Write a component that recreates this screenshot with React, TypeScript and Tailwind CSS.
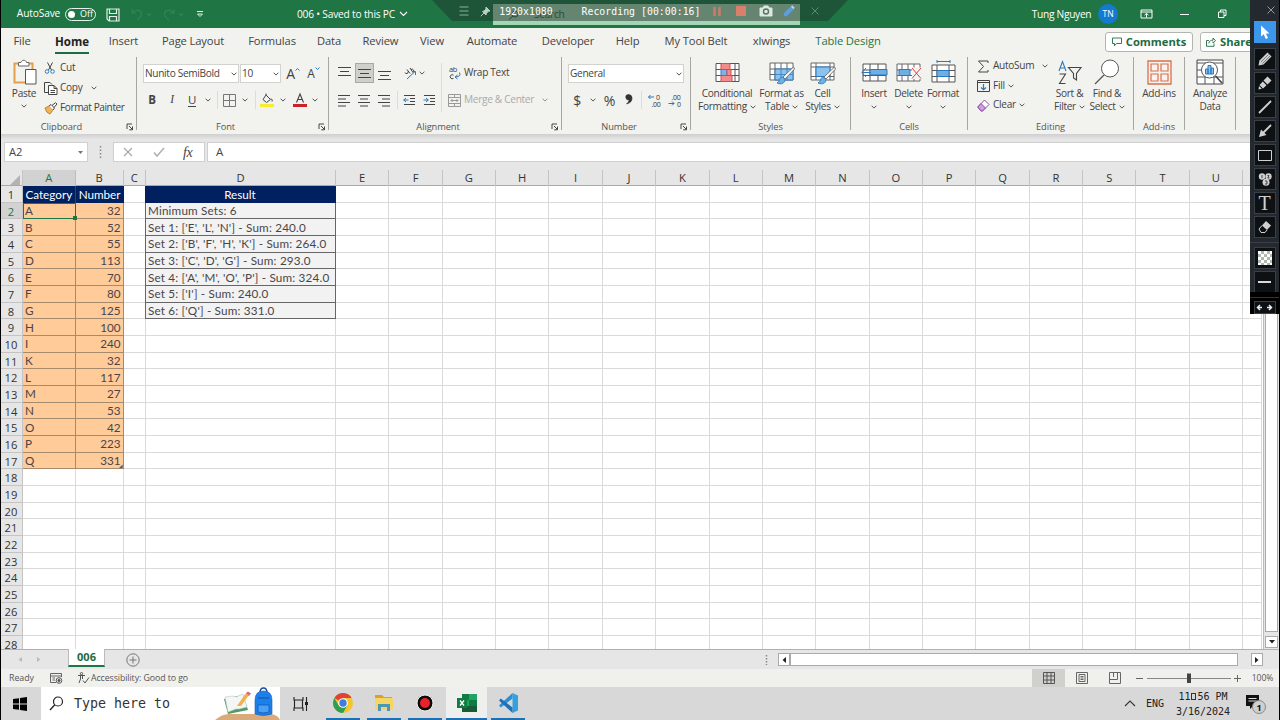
import type { ReactNode } from "react";

type BoxProps = { c?: string; children?: ReactNode };

/** Fixed-size centring cell used by every bar of the window. */
function C({ c = "", children }: BoxProps) {
  return (
    <div className={`flex shrink-0 items-center justify-center whitespace-nowrap ${c}`}>{children}</div>
  );
}

function Chev({ c = "w-[6px]" }: { c?: string }) {
  return (
    <svg viewBox="0 0 6 4" className={`h-[4px] shrink-0 ${c}`} fill="none" stroke="#555" strokeWidth="1">
      <path d="M0.6 0.7 3 3.1 5.4 0.7" />
    </svg>
  );
}

function Svg({ w, h, c, children }: { w: number; h: number; c?: string; children: ReactNode }) {
  return (
    <svg width={w} height={h} viewBox={`0 0 ${w} ${h}`} fill="none" stroke="#444" className={`shrink-0 overflow-visible ${c ?? ""}`}>
      {children}
    </svg>
  );
}

/* ---------- Title bar ---------- */

function TitleBar() {
  return (
    <div className="flex h-[28px] shrink-0 items-center bg-[#1f7543] text-[10.2px] text-white">
      <C c="ml-[16px] w-[43px] tracking-[-0.15px]">AutoSave</C>
      <div className="ml-[5px] flex h-[13px] w-[31px] items-center rounded-full border border-white/90 pl-[2px]">
        <span className="h-[7px] w-[7px] rounded-full bg-white" />
        <span className="ml-[5px] text-[9px]">Off</span>
      </div>
      <Svg w={14} h={14} c="ml-[10px] mt-px">
        <path d="M1 1H13V13H3L1 11ZM3.5 1V5.5H10.5V1M3.5 13V8.5H10.5V13" stroke="#e3f0e8" strokeWidth="1.2" />
      </Svg>
      <Svg w={24} h={13} c="ml-[10px]">
        <path d="M2 1V5H6M2.3 4.8C5 1 12 1.500 11.500 6.500 11 9 9 10 7 12M17 5.500 19 7.500 21 5.500" stroke="#348457" strokeWidth="1.2" />
      </Svg>
      <Svg w={24} h={13} c="ml-[8px]">
        <path d="M12 1V5H8M11.700 4.800C9 1 2 1.500 2.500 6.500 3 9 5 10 7 12M17 5.500 19 7.500 21 5.500" stroke="#348457" strokeWidth="1.2" />
      </Svg>
      <Svg w={8} h={8} c="ml-[10px]">
        <path d="M1 1.500H7M1.500 4 4 6.500 6.500 4Z" stroke="#e3f0e8" />
      </Svg>
      <C c="ml-[92px] w-[100px] pt-[2px] tracking-[-0.2px]">006 • Saved to this PC</C>
      <Svg w={9} h={6} c="ml-[3px]">
        <path d="M1 1 4.500 4.500 8 1" stroke="#fff" strokeWidth="1.1" />
      </Svg>
      <C c="ml-[624px] w-[59px] pt-px tracking-[-0.3px]">Tung Nguyen</C>
      <C c="ml-[7px] h-[20px] w-[20px] rounded-full bg-[#1479d0] text-[8.5px]">TN</C>
      <Svg w={13} h={10} c="ml-[22px]">
        <path d="M1 1H12V9H1ZM1 3H12M6.500 8.500V4.500M4.500 6.200 6.500 4.300 8.500 6.200" stroke="#fff" />
      </Svg>
      <Svg w={9} h={3} c="ml-[27px]"><path d="M0 1.500H9" stroke="#fff" /></Svg>
      <Svg w={10} h={10} c="ml-[28px]">
        <path d="M1.500 3H7V8.500H1.500ZM3.500 3V1H9V6.500H7" stroke="#fff" />
      </Svg>
    </div>
  );
}

/* ---------- Ribbon tabs ---------- */

const tabs: [string, string][] = [
  ["File", "ml-[13px] w-[16px]"],
  ["Home", "ml-[25px] w-[34px]"],
  ["Insert", "ml-[20px] w-[29px]"],
  ["Page Layout", "ml-[24px] w-[62px]"],
  ["Formulas", "ml-[25px] w-[46px]"],
  ["Data", "ml-[22px] w-[24px]"],
  ["Review", "ml-[22px] w-[35px]"],
  ["View", "ml-[22px] w-[24px]"],
  ["Automate", "ml-[23px] w-[50px]"],
  ["Developer", "ml-[25px] w-[52px]"],
  ["Help", "ml-[22px] w-[23px]"],
  ["My Tool Belt", "ml-[26px] w-[62px]"],
  ["xlwings", "ml-[26px] w-[37px]"],
  ["Table Design", "ml-[26px] w-[64px] text-[#1f7543]"],
];

function TabBar() {
  return (
    <div className="flex h-[28px] shrink-0 items-center overflow-hidden bg-[#f2f2ee] text-[11.2px] tracking-[-0.12px] text-[#444]">
      {tabs.map(([t, c]) =>
        t === "Home" ? (
          <div key={t} className={`flex h-[24px] flex-col items-center justify-between border-b-2 border-[#1f6b41] ${c}`}>
            <span className="pt-[3px] text-[11.5px] font-bold tracking-normal text-[#222]">{t}</span>
          </div>
        ) : (
          <C key={t} c={`pb-px ${c}`}>{t}</C>
        )
      )}
      <C c="ml-[225px] h-[20px] w-[88px] gap-[4px] rounded-[3px] border border-[#b5b5b0] bg-white text-[11.2px] font-bold tracking-normal text-[#1f6b41]">
        <Svg w={10} h={10}><path d="M0.500 1H9.500V6.500H4.500L2.500 8.800V6.500H0.500Z" stroke="#1f6b41" strokeWidth="0.9" /></Svg>
        Comments
      </C>
      <div className="ml-[7px] flex h-[20px] w-[70px] shrink-0 items-center gap-[4px] rounded-[3px] border border-[#b5b5b0] bg-white pl-[5px] text-[11.2px] font-bold tracking-normal text-[#1f6b41]">
        <Svg w={10} h={10}><path d="M3 3.500H0.500V9.300H8V6.500M2.800 6.500C3 4 5 3.200 7 3.200V1L9.500 3.700 7 6V4.500" stroke="#1f6b41" strokeWidth="0.9" /></Svg>
        Share
      </div>
    </div>
  );
}

/* ---------- Ribbon ---------- */

function Group({ w, label, launcher, children }: { w: string; label: string; launcher?: boolean; children: ReactNode }) {
  return (
    <div className={`flex h-[78px] shrink-0 flex-col ${w}`}>
      <div className="flex h-[64px]">
        <div className="flex min-w-0 flex-1">{children}</div>
      </div>
      <div className="flex h-[14px] items-center justify-center text-[9.3px] tracking-[-0.1px] whitespace-nowrap text-[#555]">
        <span className="flex-1 text-center">{label}</span>
        {launcher && (
          <Svg w={8} h={8} c="ml-[4px] mr-[2px]"><path d="M1 6V1H6M3 3 6.500 6.500M6.500 3.500V6.800H3.200" /></Svg>
        )}
      </div>
    </div>
  );
}

function Divider() {
  return <div className="mt-[1px] h-[73px] w-px shrink-0 bg-[#a6a6a3]" />;
}

function Sep({ c = "" }: { c?: string }) {
  return <div className={`w-px shrink-0 bg-[#dcdcd8] ${c}`} />;
}

function Lines({ d }: { d: string }) {
  return <Svg w={13} h={13}><path d={d} /></Svg>;
}

function Big({ w, icon, a, b, chevB, below }: { w: string; icon: ReactNode; a: string; b?: string; chevB?: boolean; below?: boolean }) {
  return (
    <div className={`flex shrink-0 flex-col items-center leading-[13px] whitespace-nowrap ${w}`}>
      <C c="h-[31px] w-[28px] pt-[1px]">{icon}</C>
      <span>{a}</span>
      {b && <span className="flex items-center gap-[3px]">{b}{chevB && <Chev />}</span>}
      {below && <Chev c="mt-[5px] w-[6px]" />}
    </div>
  );
}

function GridBase() {
  return <path d="M1 3H24V20H1ZM1 9H24M1 14.500H24M6 3V20M12 3V20M18 3V20" fill="#fff" stroke="#666" />;
}

function Brush() {
  return (
    <>
      <path d="M24.500 7 14 17 16 19 25.500 9Z" fill="#fff" stroke="#666" strokeWidth="0.900" />
      <path d="M13.500 17C10 17 11.500 21 8 23 12.500 25 16 23 16 19.500Z" fill="#6eb0e6" stroke="#2b78bd" strokeWidth="0.900" />
    </>
  );
}

function Ribbon() {
  return (
    <div className="flex h-[78px] shrink-0 overflow-hidden bg-[#f2f2ee] text-[10.1px] tracking-[-0.3px] text-[#444]">
      <Group w="w-[135px]" label="Clipboard" launcher>
        <div className="ml-[9px] flex w-[28px] shrink-0 flex-col items-center">
          <Svg w={25} h={28} c="mt-[3px]">
            <path d="M8 4.500H2.500V23.500H13" stroke="#e3a04c" strokeWidth="2" />
            <path d="M16 4.500H20.500V10" stroke="#e3a04c" strokeWidth="2" />
            <path d="M6.500 7V3.500H9C9.500 0.500 14 0.500 14.500 3.500H17V7Z" fill="#fff" stroke="#666" />
            <path d="M13.500 10.500H24V25H13.500Z" fill="#fff" stroke="#555" />
          </Svg>
          <span className="leading-[13px]">Paste</span>
          <Chev c="mt-[4px] w-[6px]" />
        </div>
        <div className="ml-[6px] flex flex-col pt-[2px]">
          <div className="flex h-[20px] items-center gap-[4px]">
            <Svg w={12} h={12}>
              <path d="M3.500 0.500 7.500 8M8.500 0.500 4.500 8" />
              <circle cx="3" cy="9.500" r="1.800" stroke="#2e83c4" /><circle cx="8.500" cy="9.500" r="1.800" stroke="#2e83c4" />
            </Svg>
            Cut
          </div>
          <div className="flex h-[20px] items-center gap-[2px]">
            <Svg w={14} h={13}>
              <path d="M4 10.500H0.500V0.500H6L8 2.500" /><path d="M4.500 3.500H10L13 6.500V12.500H4.500ZM10 3.500V6.500H13M6.500 8.500H11M6.500 10.500H11" fill="#fff" />
            </Svg>
            Copy <Chev c="ml-[7px] w-[6px]" />
          </div>
          <div className="flex h-[20px] items-center gap-[2px] tracking-[-0.42px] whitespace-nowrap">
            <Svg w={14} h={13}>
              <path d="M1 6 5 4 9 8 6 12Q2 11 1 6Z" fill="#f0b35c" stroke="#c9822c" />
              <path d="M5 4 7 2.500 10.500 6 9 8M8 3.500 11.500 0.700 13 2 10 5.500" fill="#fff" />
            </Svg>
            Format Painter
          </div>
        </div>
      </Group>
      <Divider />

      <Group w="w-[191px]" label="Font" launcher>
        <div className="flex flex-col">
          <div className="ml-[6px] mt-[8px] flex h-[19px] items-center">
            <div className="flex h-[19px] w-[96px] items-center justify-between border border-[#d2d2ce] bg-white pl-[1px] pr-[1px]">
              <span className="whitespace-nowrap">Nunito SemiBold</span><Chev />
            </div>
            <div className="ml-[1px] flex h-[19px] w-[41px] items-center justify-between border border-[#d2d2ce] bg-white pl-[1px] pr-[1px]">
              <span>10</span><Chev />
            </div>
            <C c="ml-[5px] w-[14px] items-start text-[14px] leading-[15px]">A<Svg w={5} h={5} c="mt-[1px]"><path d="M0.500 3.500 2.500 1.500 4.500 3.500" stroke="#2b78bd" /></Svg></C>
            <C c="ml-[7px] w-[13px] items-start text-[12px] leading-[15px]">A<Svg w={5} h={5}><path d="M0.500 1.500 2.500 3.500 4.500 1.500" stroke="#2b78bd" /></Svg></C>
          </div>
          <div className="ml-[9px] mt-[7px] flex h-[20px] items-center text-[11.5px]">
            <C c="w-[12px] font-bold">B</C>
            <C c="ml-[8px] w-[12px] font-['Liberation_Serif'] italic">I</C>
            <C c="ml-[8px] w-[12px] underline underline-offset-2">U</C>
            <C c="ml-[6px] w-[8px]"><Chev /></C>
            <Sep c="ml-[5px] h-[18px]" />
            <Svg w={13} h={13} c="ml-[5px]"><path d="M0.500 0.500H12.500V12.500H0.500ZM6.500 1V12M1 6.500H12" stroke="#777" /></Svg>
            <Chev c="ml-[6px] w-[6px]" />
            <Sep c="ml-[7px] h-[18px]" />
            <Svg w={14} h={15} c="ml-[4px]">
              <path d="M6 2 10.500 6.500 6.500 9.500 3 6.500ZM6 2V0.500M11 5.500Q13 7 12 8.500" />
              <path d="M0 12.500H14" stroke="#f4ee2f" strokeWidth="3" />
            </Svg>
            <Chev c="ml-[6px] w-[6px]" />
            <Svg w={14} h={15} c="ml-[7px]">
              <path d="M3.500 9.500 7 1 10.500 9.500M4.700 6.500H9.300" strokeWidth="1.1" />
              <path d="M0 12.500H14" stroke="#cc2229" strokeWidth="3" />
            </Svg>
            <Chev c="ml-[5px] w-[6px]" />
          </div>
        </div>
      </Group>
      <Divider />

      <Group w="w-[232px]" label="Alignment" launcher>
        <div className="flex flex-col">
          <div className="ml-[9px] mt-[7px] flex h-[20px] items-center">
            <div className="-mt-[3px]"><Lines d="M0 2.500H13M2 6.500H11M0 10.500H13" /></div>
            <C c="ml-[4px] h-[20px] w-[19px] border border-[#a8a8a5] bg-[#cfcfcc]"><Lines d="M0 2.500H13M2 6.500H11M0 10.500H13" /></C>
            <div className="ml-[4px] pt-[5px]"><Lines d="M0 2.500H13M2 6.500H11M0 10.500H13" /></div>
            <Svg w={14} h={13} c="ml-[12px]">
              <path d="M2 5.500a1.500 1.500 0 1 0 3-1M4 2.500 7 6.500M7 1 10 5.500a1.600 1.600 0 0 0-2-3" />
              <path d="M4 12 12 4.500M9 4.500H12.500V8" stroke="#2b78bd" />
            </Svg>
            <Chev c="ml-[2px] w-[6px]" />
          </div>
          <div className="ml-[9px] mt-[7px] flex h-[20px] items-center">
            <Lines d="M0 1.500H12M0 5H8M0 8.500H12M0 12H8" />
            <div className="ml-[7px]"><Lines d="M0 1.500H12M2 5H10M0 8.500H12M2 12H10" /></div>
            <div className="ml-[7px]"><Lines d="M0 1.500H12M4 5H12M0 8.500H12M4 12H12" /></div>
            <Sep c="ml-[6px] h-[18px]" />
            <Svg w={13} h={12} c="ml-[5px]"><path d="M1 1.500H12M7 4.500H12M7 7.500H12M1 10.500H12" /><path d="M0.500 6H5.500M3 4 0.800 6 3 8" stroke="#2b78bd" /></Svg>
            <Svg w={13} h={12} c="ml-[7px]"><path d="M1 1.500H12M7 4.500H12M7 7.500H12M1 10.500H12" /><path d="M0.500 6H5.500M3 4 5.200 6 3 8" stroke="#2b78bd" /></Svg>
          </div>
        </div>
        <Sep c="ml-[5px] mt-[7px] h-[49px]" />
        <div className="flex flex-col">
          <div className="ml-[7px] mt-[7px] flex h-[20px] items-center gap-[3px]">
            <Svg w={12} h={14}>
              <text x="0" y="6" fontSize="7.500" fill="#444" stroke="none">ab</text>
              <path d="M4.500 9.200A2 2 0 1 0 4.500 12.300" />
              <path d="M10.500 6.500Q12.500 10.500 6.500 11M8.500 9 6 11 8.500 13" stroke="#2b78bd" />
            </Svg>
            Wrap Text
          </div>
          <div className="ml-[6px] mt-[7px] flex h-[20px] items-center gap-[3px] whitespace-nowrap text-[#aaa]">
            <Svg w={13} h={13}><path d="M0.500 0.500H12.500V12.500H0.500ZM0.500 3.500H12.500M0.500 9.500H12.500M6.500 0.500V3.500M6.500 9.500V12.500M3 6.500H10M4.500 5 3 6.500 4.500 8M8.500 5 10 6.500 8.500 8" stroke="#999" /></Svg>
            Merge &amp; Center <Chev c="ml-[5px] w-[6px] opacity-60" />
          </div>
        </div>
      </Group>
      <Divider />

      <Group w="w-[128px]" label="Number" launcher>
        <div className="flex flex-col">
          <div className="ml-[6px] mt-[8px] flex h-[19px] w-[116px] items-center justify-between border border-[#d2d2ce] bg-white pl-[1px] pr-[1px]">
            General<Chev />
          </div>
          <div className="ml-[9px] mt-[7px] flex h-[20px] items-center">
            <C c="w-[12px] text-[14px]">$</C>
            <Chev c="ml-[7px] w-[6px]" />
            <C c="ml-[7px] w-[13px] text-[14px]">%</C>
            <C c="ml-[6px] h-[20px] w-[14px] pb-[1px]">
              <Svg w={8} h={11}><path d="M3.500 0.500A2.700 2.700 0 1 0 4.200 5.800Q4 8 1.500 10 7.500 8.500 7 3.500 6.500 0.500 3.500 0.500Z" fill="#333" stroke="#333" strokeWidth="0.600" /></Svg>
            </C>
            <Sep c="ml-[5px] h-[18px]" />
            <Svg w={13} h={13} c="ml-[6px]">
              <path d="M0.500 3H6M2.500 1 0.500 3 2.500 5" stroke="#2b78bd" />
              <text x="8" y="5.500" fontSize="7" fill="#333" stroke="none">0</text><text x="3.500" y="13" fontSize="7" fill="#333" stroke="none">.00</text>
            </Svg>
            <Svg w={14} h={13} c="ml-[7px]">
              <text x="3.500" y="5.500" fontSize="7" fill="#333" stroke="none">.00</text><text x="9" y="13" fontSize="7" fill="#333" stroke="none">0</text>
              <path d="M0.500 9.500H6M4 7.500 6 9.500 4 11.500" stroke="#2b78bd" />
            </Svg>
          </div>
        </div>
      </Group>
      <Divider />

      <Group w="w-[159px]" label="Styles">
        <Big w="ml-[6px] w-[60px]" a="Conditional" b="Formatting" chevB icon={
          <Svg w={25} h={23}>
            <path d="M1 2.500H24V20.500H1ZM1 8.500H24M1 14.500H24M20 2.500V20.500" fill="#fff" stroke="#555" />
            <path d="M6 2.500H15V8.500H6ZM6 14.500H17V20.500H6Z" fill="#f28b8b" stroke="#d94a4a" />
            <path d="M6 8.500H12V14.500H6Z" fill="#7db4e6" stroke="#3b7fc4" /><path d="M12 8.500H16V14.500H12Z" fill="#f28b8b" stroke="#d94a4a" />
          </Svg>} />
        <Big w="w-[49px]" a="Format as" b="Table" chevB icon={
          <Svg w={26} h={25}><GridBase /><path d="M6 9H24V20H6Z" fill="#8cc2ee" stroke="#2b78bd" /><path d="M6 14.500H24M12 9V20M18 9V20" stroke="#4a87bd" /><Brush /></Svg>} />
        <Big w="w-[33px]" a="Cell" b="Styles" chevB icon={
          <Svg w={26} h={25}><path d="M1 3H24V20H1ZM1 7H24M1 16.500H24M6 3V20M20 3V20" fill="#fff" stroke="#666" /><path d="M6 7H20V16.500H6Z" fill="#8cc2ee" stroke="#2b78bd" /><Brush /></Svg>} />
      </Group>
      <Divider />

      <Group w="w-[116px]" label="Cells">
        <Big w="ml-[6px] w-[34px]" a="Insert" below icon={
          <Svg w={27} h={23}><path d="M2 3H25V20H2ZM2 9H25M2 14.500H25M9 3V20M17 3V20" fill="#fff" stroke="#555" /><path d="M9 8.500H26V14H9Z" fill="#6eb0e6" stroke="#2b78bd" /><path d="M1 11.500H10M5 7 1 11.500 5 16" stroke="#2b78bd" /></Svg>} />
        <Big w="w-[35px]" a="Delete" below icon={
          <Svg w={26} h={23}><GridBase /><path d="M3 8.500H14V14.500H3Z" fill="#6eb0e6" stroke="#2b78bd" /><path d="M16 6.500H26V18H16Z" fill="#f2f2ee" stroke="none" /><path d="M16 7 25 17.500M25 7 16 17.500" stroke="#d9414a" /></Svg>} />
        <Big w="w-[34px]" a="Format" below icon={
          <Svg w={25} h={25}><path d="M1 5H24V22H1ZM1 10.500H24M1 16.500H24M6 5V22M18 5V22" fill="#fff" stroke="#555" /><path d="M6 10.500H18V16.500H6Z" fill="#6eb0e6" stroke="#2b78bd" /><path d="M6 1.500H19M6 0V3M19 0V3" stroke="#2b78bd" /></Svg>} />
      </Group>
      <Divider />

      <Group w="w-[165px]" label="Editing">
        <div className="ml-[9px] flex w-[73px] shrink-0 flex-col">
          <div className="flex h-[20px] items-center gap-[4px] whitespace-nowrap">
            <Svg w={12} h={13}><path d="M11 3V1H1.500L6.500 6.500 1.500 12H11V10" /></Svg>
            AutoSum <Chev c="ml-[4px] w-[6px]" />
          </div>
          <div className="flex h-[19px] items-center gap-[3px]">
            <Svg w={13} h={12}><path d="M0.500 0.500H12.500V11.500H0.500ZM0.500 2.500H12.500" /><path d="M6.500 4V9.500M4 7.500 6.500 9.800 9 7.500" stroke="#2b78bd" strokeWidth="1.200" /></Svg>
            Fill <Chev />
          </div>
          <div className="flex h-[20px] items-center gap-[3px]">
            <Svg w={13} h={13}><path d="M7.500 1 12 5.500 5.500 12H4L0.800 8Z" fill="#fff" stroke="#8b4fa8" /><path d="M4 4.500 8.500 9 5.500 12H4L0.800 8Z" fill="#c9a0dc" stroke="#8b4fa8" /></Svg>
            Clear <Chev />
          </div>
        </div>
        <Big w="ml-[1px] w-[37px]" a="Sort &" b="Filter" chevB icon={
          <Svg w={24} h={25}>
            <path d="M1 11 4.500 1.500 8 11M2.300 8H6.700" stroke="#2b78bd" strokeWidth="1.100" />
            <path d="M1.500 14H7.500L1.500 23.500H7.500" strokeWidth="1.100" />
            <path d="M10.500 7.500H23L18.500 13.500V20L15.500 18V13.500Z" strokeWidth="1.100" />
          </Svg>} />
        <Big w="w-[38px]" a="Find &" b="Select" chevB icon={
          <Svg w={26} h={26}><circle cx="16" cy="9.500" r="8.500" fill="#fff" stroke="#555" /><path d="M10 16 1 25" stroke="#555" strokeWidth="1.300" /></Svg>} />
      </Group>
      <Divider />

      <Group w="w-[50px]" label="Add-ins">
        <Big w="w-[50px]" a="Add-ins" icon={
          <Svg w={25} h={25}><path d="M1 1H24V24H1Z" stroke="#d9704e" strokeWidth="1.300" /><path d="M4 4H11V11H4ZM14 4H21V11H14ZM4 14H11V21H4ZM14 14H21V21H14Z" fill="#fdf3ee" stroke="#d9704e" strokeWidth="1.200" /></Svg>} />
      </Group>
      <Divider />
      <Group w="w-[50px]" label="">
        <Big w="w-[50px]" a="Analyze" b="Data" icon={
          <Svg w={28} h={27}>
            <path d="M1 1H27V25H1Z" fill="#fff" /><path d="M1 4H27M1 11H7M1 18H27M9 18V25M18 18V25" stroke="#555" />
            <circle cx="13.500" cy="11" r="8" fill="#fff" stroke="#555" /><path d="M19.500 17 26 24" stroke="#444" strokeWidth="1.600" />
            <path d="M9.500 10H12V15H9.500ZM12 6.500H15V15H12ZM15 9H17.500V15H15Z" fill="#8cc2ee" stroke="#2b78bd" />
          </Svg>} />
      </Group>
      <Divider />
    </div>
  );
}

/* ---------- Formula bar ---------- */

function FormulaBar() {
  return (
    <div className="flex h-[36px] shrink-0 items-start bg-gradient-to-b from-[#cfcfcf] from-0% via-[#e6e6e6] via-15% to-[#e6e6e6] pt-[8px] text-[11.2px] text-[#444]">
      <div className="ml-[3px] flex h-[20px] w-[84px] items-center justify-between border border-[#d0d0d0] bg-white pl-[4px] pr-[4px]">
        A2
        <Svg w={5} h={3}><path d="M0 0H5L2.500 3Z" fill="#777" stroke="none" /></Svg>
      </div>
      <Svg w={3} h={12} c="ml-[11px] mt-[4px]"><path d="M1.500 0V12" stroke="#888" strokeWidth="1.500" strokeDasharray="1.500 2" /></Svg>
      <div className="ml-[11px] flex h-[20px] w-[92px] items-center border border-[#d0d0d0] bg-white">
        <Svg w={10} h={10} c="ml-[9px]"><path d="M1 1 9 9M9 1 1 9" stroke="#aaa" strokeWidth="1.200" /></Svg>
        <Svg w={12} h={10} c="ml-[20px]"><path d="M1 5.500 4 9 11 1" stroke="#b0b0b0" strokeWidth="1.500" /></Svg>
        <span className="ml-[18px] font-['Liberation_Serif'] text-[14px] tracking-[-0.3px] italic text-[#444]">fx</span>
      </div>
      <div className="ml-[2px] flex h-[20px] flex-1 items-center border border-r-0 border-[#d0d0d0] bg-white pl-[8px] text-[11.5px]">A</div>
    </div>
  );
}

/* ---------- Sheet ---------- */

const categories: [string, number][] = [
  ["A", 32], ["B", 52], ["C", 55], ["D", 113], ["E", 70], ["F", 80], ["G", 125], ["H", 100],
  ["I", 240], ["K", 32], ["L", 117], ["M", 27], ["N", 53], ["O", 42], ["P", 223], ["Q", 331],
];

const results = [
  "Minimum Sets: 6",
  "Set 1: ['E', 'L', 'N'] - Sum: 240.0",
  "Set 2: ['B', 'F', 'H', 'K'] - Sum: 264.0",
  "Set 3: ['C', 'D', 'G'] - Sum: 293.0",
  "Set 4: ['A', 'M', 'O', 'P'] - Sum: 324.0",
  "Set 5: ['I'] - Sum: 240.0",
  "Set 6: ['Q'] - Sum: 331.0",
];

const restCols = "EFGHIJKLMNOPQRSTU".split("");
const rows = Array.from({ length: 28 }, (_, i) => i + 1);

const gridCols = "grid grid-cols-[23px_52.6px_48px_22.4px_190px_repeat(17,53.37px)_19px]";
const line = "border-r border-b border-[#dadada]";

function HeaderRow() {
  return (
    <div className={`${gridCols} h-[16px] shrink-0 border-b border-[#a9a9a9] bg-[#e6e6e6] text-[11.2px] leading-[16px] text-[#333]`}>
      <div className="flex items-end justify-end border-r border-[#c4c4c4] p-[2px]">
        <Svg w={10} h={10}><path d="M10 0V10H0Z" fill="#b3b3b3" stroke="none" /></Svg>
      </div>
      <div className="border-r border-b border-b-[#1f7543] border-[#bdbdbd] bg-[#d2d2d2] text-center text-[#1f7543]">A</div>
      {["B", "C", "D", ...restCols].map((c) => (
        <div key={c} className="border-r border-[#c4c4c4] text-center">{c}</div>
      ))}
      <div className="border-r border-[#c4c4c4]" />
    </div>
  );
}

function CategoryCells({ r }: { r: number }) {
  if (r === 1)
    return (
      <>
        <div className="flex items-center justify-center border-r border-[#2c4470] bg-[#002060] text-white">Category</div>
        <div className="flex items-center justify-center bg-[#002060] text-white">Number</div>
      </>
    );
  const d = categories[r - 2];
  if (!d) return (<><div className={line} /><div className={line} /></>);
  return (
    <>
      <div className={`relative flex items-center border-r border-b border-[#a58a6d] bg-[#fecb99] pl-[2px] ${r === 2 ? "z-10 outline-[1.5px] -outline-offset-1 outline-[#1f7543]" : ""}`}>
        {d[0]}
        {r === 2 && <span className="absolute -right-[2px] -bottom-[2px] h-[4px] w-[4px] bg-[#1f7543]" />}
      </div>
      <div className="relative flex items-center justify-end border-r border-b border-[#a58a6d] bg-[#fecb99] pr-[2px]">
        {d[1]}
        {r === 17 && <span className="absolute right-0 bottom-0 h-[4px] w-[4px] bg-[#4d5590] [clip-path:polygon(100%_0,100%_100%,0_100%)]" />}
      </div>
    </>
  );
}

function ResultCell({ r }: { r: number }) {
  if (r === 1) return <div className="-ml-px flex items-center justify-center border-r border-[#002060] bg-[#002060] text-white">Result</div>;
  const t = results[r - 2];
  if (!t) return <div className={line} />;
  return (
    <div className="-ml-px flex items-center border border-t-0 border-[#666] bg-[#f2f2f2] pl-[2px] tracking-[0.18px] whitespace-nowrap">{t}</div>
  );
}

function Sheet() {
  return (
    <div className="flex h-[479px] shrink-0 bg-white">
      <div className="-ml-px flex w-[1263px] shrink-0 flex-col overflow-hidden">
        <HeaderRow />
        {rows.map((r) => (
          <div key={r} className={`${gridCols} h-[16.68px] shrink-0 grid-rows-[16.68px] font-[Lato] text-[11.7px] leading-[15px] text-[#4b4548]`}>
            <div className={`flex items-center justify-center border-r border-b border-[#c4c4c4] pt-[2px] font-['Open_Sans'] text-[11.2px] leading-[14px] ${r === 2 ? "bg-[#d2d2d2] text-[#1f7543]" : "bg-[#e6e6e6] text-[#333]"}`}>{r}</div>
            <CategoryCells r={r} />
            <div className={line} />
            <ResultCell r={r} />
            {restCols.map((c) => <div key={c} className={line} />)}
            <div className={line} />
          </div>
        ))}
      </div>
      <div className="flex flex-1 flex-col justify-end border-l border-[#bbb] bg-[#e6e6e6] px-[1px]">
        <div className="mb-[4px] flex-1 border border-[#aaa] bg-white" />
        <C c="mb-px h-[12px] border border-[#aaa] bg-white"><Svg w={6} h={4}><path d="M0 0H6L3 3.500Z" fill="#222" stroke="none" /></Svg></C>
      </div>
    </div>
  );
}

/* ---------- Bottom bars ---------- */

function SheetTabs() {
  return (
    <div className="flex h-[20px] shrink-0 items-center border-t border-[#b0b0b0] bg-[#e6e6e6]">
      <Svg w={4} h={5} c="ml-[17px]"><path d="M4 0V5L0.500 2.500Z" fill="#bbb" stroke="none" /></Svg>
      <Svg w={4} h={5} c="ml-[15px]"><path d="M0 0V5L3.500 2.500Z" fill="#bbb" stroke="none" /></Svg>
      <C c="-mt-[3px] ml-[27px] h-[18px] w-[37px] border-x border-b-2 border-x-[#bbb] border-b-[#1f7543] bg-white text-[11px] font-bold text-[#1f6b41]">006</C>
      <Svg w={14} h={14} c="ml-[21px]"><circle cx="7" cy="7" r="6.200" stroke="#777" /><path d="M7 3.500V10.500M3.500 7H10.500" stroke="#777" /></Svg>
      <Svg w={3} h={10} c="ml-[625px]"><path d="M1.500 0V10" stroke="#888" strokeWidth="1.500" strokeDasharray="1.500 1.500" /></Svg>
      <C c="ml-[10px] h-[13px] w-[12px] border border-[#aaa] bg-white"><Svg w={4} h={6}><path d="M4 0V6L0.500 3Z" fill="#222" stroke="none" /></Svg></C>
      <div className="h-[13px] w-[448px] border border-[#aaa] bg-white" />
      <C c="ml-[13px] h-[13px] w-[12px] border border-[#aaa] bg-white"><Svg w={4} h={6}><path d="M0 0V6L3.500 3Z" fill="#222" stroke="none" /></Svg></C>
    </div>
  );
}

function StatusBar() {
  return (
    <div className="flex h-[18px] shrink-0 items-center bg-[#f0f1ec] text-[8.800px] text-[#555]">
      <C c="ml-[8px] w-[25px] pt-px">Ready</C>
      <Svg w={13} h={11} c="ml-[16px]"><path d="M0.500 0.500H11.500V4M0.500 0.500V9.500H6M0.500 3H11.500M2.500 5H5M2.500 7H5" stroke="#666" /><circle cx="9" cy="7.500" r="2.800" stroke="#555" /><circle cx="9" cy="7.500" r="1" fill="#555" /></Svg>
      <Svg w={13} h={12} c="ml-[14px]"><circle cx="4.500" cy="1.700" r="1.200" stroke="#555" /><path d="M1 3.500H8M3.500 4V7L2 11M5.500 4V7M6 8.500 8 11 12 5.500" stroke="#555" /></Svg>
      <C c="ml-[1px] w-[97px] pt-px tracking-[-0.08px]">Accessibility: Good to go</C>
      <C c="ml-[844px] h-[18px] w-[33px] bg-[#d0d1cc]">
        <Svg w={12} h={12}><path d="M0.500 0.500H11.500V11.500H0.500ZM4 0.500V11.500M8 0.500V11.500M0.500 4H11.500M0.500 8H11.500" stroke="#555" /></Svg>
      </C>
      <Svg w={12} h={12} c="ml-[11px]"><path d="M0.500 0.500H11.500V11.500H0.500ZM3 2.500H9V9.500H3ZM4.500 4.500H7.500M4.500 6H7.500M4.500 7.500H7.500" stroke="#666" /></Svg>
      <Svg w={12} h={12} c="ml-[21px]"><path d="M0.500 0.500H11.500V11.500H0.500ZM4.500 0.500V5M8.500 0.500V7.500H0.500" stroke="#666" /></Svg>
      <Svg w={7} h={3} c="ml-[15px]"><path d="M0 1.500H7" stroke="#666" /></Svg>
      <Svg w={84} h={10} c="ml-[4px]"><path d="M0 5.500H84" stroke="#888" /><path d="M40 0.500H44V10H40Z" fill="#444" stroke="none" /></Svg>
      <Svg w={7} h={7} c="ml-[3px]"><path d="M0 3.500H7M3.500 0V7" stroke="#666" /></Svg>
      <C c="ml-[11px] w-[21px] pt-px text-[8.600px] tracking-[-0.1px]">100%</C>
    </div>
  );
}

function TaskApp({ c, active, children }: { c: string; active?: boolean; children: ReactNode }) {
  return (
    <div className={`flex h-[33px] shrink-0 flex-col items-center justify-between border-b-2 border-[#1c70b5] pt-[6px] ${active ? "bg-[#efefee]" : ""} ${c}`}>
      {children}
    </div>
  );
}

function Taskbar() {
  return (
    <div className="flex h-[33px] shrink-0 items-center bg-[#d8d8d8] text-[#222]">
      <Svg w={14} h={14} c="ml-[12px]"><path d="M0 2 6 1.200V6.600H0ZM7 1 14 0V6.600H7ZM0 7.500H6V12.800L0 12ZM7 7.500H14V14L7 13Z" fill="#000" stroke="none" /></Svg>
      <div className="ml-[14px] flex h-[33px] w-[239px] shrink-0 items-center overflow-hidden bg-white">
        <Svg w={15} h={15} c="ml-[8px]"><circle cx="9" cy="5.500" r="4.500" stroke="#222" strokeWidth="1.200" /><path d="M5.800 8.800 1 14" stroke="#222" strokeWidth="1.300" /></Svg>
        <span className="ml-[10px] pt-px whitespace-pre font-['DejaVu_Sans_Mono'] text-[13.300px] text-[#333]">Type here to</span>
        <Svg w={65} h={33} c="ml-auto">
          <path d="M0 33Q8 26 16 27L56 27Q63 28 65 33Z" fill="#d9ab7b" stroke="none" />
          <path d="M9 12 28 8 33 23 13 27Z" fill="#4f9a68" stroke="none" />
          <path d="M10 10 18 9 21 10 28 7 32 20 24 22 21 22 13 25Z" fill="#f3f6f4" stroke="#b9c9c0" strokeWidth="0.600" />
          <path d="M22 19 31 6 34 8 26 19Z" fill="#f2b14a" stroke="none" /><path d="M31 6 33 4.500 36 6.500 34 9Z" fill="#e06a6a" stroke="none" />
          <path d="M45 6Q45 1 48.500 1T52 6" stroke="#1a4fa0" strokeWidth="1.500" />
          <path d="M40 27V13Q40 4 48.500 4T57 13V27Q48 30 40 27Z" fill="#1d7fe8" stroke="#1560c0" strokeWidth="0.600" />
          <path d="M43 18H54V25Q48 27 43 25Z" fill="#4aa0f5" stroke="#0f52b0" strokeWidth="0.700" /><path d="M43 11H54" stroke="#0f52b0" />
        </Svg>
      </div>
      <Svg w={15} h={14} c="ml-[13px]"><path d="M1 0V3H10V0M1 14V11H10V14M1.500 3V11M9.500 3V11M13.500 0V14" stroke="#222" strokeWidth="1.100" /><path d="M12 5H15V8H12Z" fill="#222" stroke="none" /></Svg>
      <TaskApp c="ml-[18px] w-[34px]">
        <Svg w={20} h={20}>
          <circle cx="10" cy="10" r="10" fill="#f6c52c" stroke="none" />
          <path d="M10 10 1.340 5A10 10 0 0 1 18.660 5H10Z" fill="#dd4436" stroke="none" />
          <path d="M10 10 5.700 12.500 1.340 5A10 10 0 0 0 10 20L14.300 12.500Z" fill="#2f9e50" stroke="none" />
          <circle cx="10" cy="10" r="4.800" fill="#fff" stroke="none" /><circle cx="10" cy="10" r="3.700" fill="#3c7de0" stroke="none" />
        </Svg>
      </TaskApp>
      <TaskApp c="ml-[7px] w-[34px]">
        <Svg w={20} h={20}>
          <path d="M1 2H8L10 4H18V9H1Z" fill="#d9a030" stroke="none" /><path d="M1 5H19V17H1Z" fill="#f6d567" stroke="none" />
          <path d="M4 11H16V18H13V14H7V18H4Z" fill="#4b97b5" stroke="none" />
        </Svg>
      </TaskApp>
      <TaskApp c="ml-[7px] w-[34px]">
        <Svg w={20} h={20}><circle cx="10" cy="10" r="8" fill="#0b0b0b" stroke="#f0f0f0" /><circle cx="10" cy="10" r="5" fill="#e8222a" stroke="none" /></Svg>
      </TaskApp>
      <TaskApp active c="ml-[4px] w-[41px]">
        <Svg w={20} h={20}>
          <path d="M5 1H20V19H5Z" fill="#21a366" stroke="none" /><path d="M5 1H12V7H5Z" fill="#107c41" stroke="none" />
          <path d="M12 7H20V13H12Z" fill="#107c41" stroke="none" /><path d="M5 13H20V19H5Z" fill="#185c37" stroke="none" />
          <path d="M0 5H10V15H0Z" fill="#107c41" stroke="none" /><path d="M3 7.500 7 12.500M7 7.500 3 12.500" stroke="#fff" strokeWidth="1.400" />
        </Svg>
      </TaskApp>
      <TaskApp c="ml-[4px] w-[34px]">
        <Svg w={20} h={20}>
          <path d="M14.500 0 20 2.500V17.500L14.500 20Z" fill="#35a0e0" stroke="none" />
          <path d="M14.500 0 1 12.500 2.800 14.500 14.500 5.500Z" fill="#2b8fd6" stroke="none" /><path d="M14.500 20 1 7.500 2.800 5.500 14.500 14.500Z" fill="#1c73b5" stroke="none" />
        </Svg>
      </TaskApp>
      <Svg w={12} h={7} c="ml-[599px]"><path d="M1 6 6 1 11 6" stroke="#333" strokeWidth="1.100" /></Svg>
      <C c="ml-[10px] w-[18px] font-['DejaVu_Sans_Mono'] text-[10px]">ENG</C>
      <div className="ml-[12px] flex w-[54px] shrink-0 flex-col items-center whitespace-nowrap font-['DejaVu_Sans_Mono'] text-[10px] leading-[15px]">
        <span className="flex items-center">11<span className="mx-[1px] h-[7px] w-[5px] border border-[#333]" />56 PM</span>
        <span>3/16/2024</span>
      </div>
      <Svg w={21} h={22} c="ml-[16px]">
        <path d="M0 2H13V13H7L4 16V13H0Z" fill="#111" stroke="none" /><path d="M2.500 5.500H10.500M2.500 8H10.500" stroke="#ddd" />
        <circle cx="13" cy="14" r="6.500" fill="#cfcfcf" stroke="#888" />
        <text x="10.500" y="17.500" fontSize="9" fontWeight="bold" fill="#111" stroke="none">1</text>
      </Svg>
    </div>
  );
}

/* ---------- Floating recorder overlays ---------- */

function RecorderBar() {
  return (
    <div className="absolute left-[432px] top-0 flex h-[25px] w-[416px] items-start font-['DejaVu_Sans_Mono'] text-[9.800px] text-white">
      <div className="absolute inset-x-0 top-0 h-[21px] bg-[#1e5539] [clip-path:polygon(0_0,100%_0,calc(100%-20px)_100%,20px_100%)]" />
      <div className="absolute left-[61px] top-[4px] h-[21px] w-[307px] bg-[#658570]" />
      <div className="absolute left-[61px] top-[21px] h-[4px] w-[307px] bg-[#a5d5b7]" />
      <div className="absolute left-[76px] top-[8px] flex items-center gap-[15px] font-['Open_Sans'] text-[10.200px] leading-[13px] tracking-[-0.300px] text-[#2c4a39]">
        <Svg w={11} h={10}><circle cx="7" cy="4" r="3" stroke="#2c4a39" /><path d="M5 6 1 9.500" stroke="#2c4a39" /></Svg>
        Search
      </div>
      <div className="relative flex h-[22px] w-full items-center">
        <Svg w={10} h={10} c="ml-[27px]"><path d="M0.500 1H9.500M0.500 5H9.500M0.500 9H9.500" stroke="#8fae9d" /></Svg>
        <Svg w={11} h={11} c="ml-[11px]"><path d="M6 1 10 5 8.500 5.200 6.500 7.200 6 9 2.500 5.500 4 5 6 3ZM4 7 0.800 10.200" fill="#b9cdc1" stroke="#b9cdc1" /></Svg>
        <C c="ml-[8px] w-[54px] pt-[2px] tracking-[0.050px]">1920x1080</C>
        <C c="ml-[28px] w-[120px] pt-[2px] tracking-[0.05px]">Recording [00:00:16]</C>
        <Svg w={8} h={9} c="ml-[12px]"><path d="M1.500 0V9M6.500 0V9" stroke="#d07a68" strokeWidth="2.500" /></Svg>
        <div className="ml-[15px] h-[10px] w-[10px] bg-[#d8806c]" />
        <Svg w={14} h={12} c="ml-[13px]"><path d="M1 3H4L5 1H9L10 3H13V11H1Z" fill="#dde8e0" stroke="#dde8e0" /><circle cx="7" cy="6.500" r="2.500" fill="#dde8e0" stroke="#527563" strokeWidth="1.400" /></Svg>
        <Svg w={12} h={12} c="ml-[10px]"><path d="M1 11 2 7.500 7.500 2 10 4.500 4.500 10Z" fill="#5c9fe0" stroke="#5c9fe0" /><path d="M8.500 1 11 3.500" stroke="#b5d4f2" strokeWidth="2" /></Svg>
        <Svg w={8} h={8} c="ml-[16px]"><path d="M0.500 0.500 7.500 7.500M7.500 0.500 0.500 7.500" stroke="#5f8873" /></Svg>
      </div>
    </div>
  );
}

function Tool({ c = "mt-[2px]", children }: BoxProps) {
  return <C c={`h-[22px] w-[22px] border border-[#3a3f45] bg-[#0e1114] ${c}`}>{children}</C>;
}

function DrawToolbar() {
  const g = "#d0d0d0";
  return (
    <div className="absolute left-[1250px] top-0 flex h-[314px] w-[29px] flex-col items-center overflow-hidden bg-[#23292f]">
      <Svg w={8} h={8} c="mt-[6px] ml-[12px]"><path d="M0.500 0.500 7.500 7.500M7.500 0.500 0.500 7.500" stroke="#999" /></Svg>
      <C c="mt-[7px] h-[22px] w-[22px] bg-[#3d96ea]">
        <Svg w={10} h={15}><path d="M1 0.500V11.500L3.700 9.200 5.800 14 8 13 5.900 8.500H9.500Z" fill="#fff" stroke="none" /></Svg>
      </C>
      <Tool c="mt-[5px]"><Svg w={14} h={14}><path d="M0.500 13.500 1.500 8.500 9.500 0.500 13.500 4.500 5.500 12.500Z" fill={g} stroke="none" /><path d="M3 10 10.500 2.500M4.500 11.500 12 4" stroke="#555" strokeWidth="0.700" /></Svg></Tool>
      <Tool><Svg w={14} h={14}><path d="M9.500 0.500 13.500 4.500 9.500 8.500 5.500 4.500ZM4.800 5.500 8.500 9.200 5 12.500 1.500 9ZM1 10 3.800 12.800 0.500 13.500Z" fill={g} stroke="none" /></Svg></Tool>
      <Tool><Svg w={14} h={14}><path d="M1 13 13 1" stroke={g} strokeWidth="1.800" /></Svg></Tool>
      <Tool><Svg w={14} h={14}><path d="M5 9 13 1" stroke={g} strokeWidth="1.800" /><path d="M1 13 3 5.500 8.500 11Z" fill={g} stroke="none" /></Svg></Tool>
      <Tool><Svg w={14} h={11}><path d="M0.500 0.500H13.500V10.500H0.500Z" stroke={g} /></Svg></Tool>
      <Tool>
        <Svg w={14} h={14}>
          <circle cx="4" cy="4.500" r="3.200" fill={g} stroke="none" /><circle cx="10.500" cy="4.500" r="3.200" fill={g} stroke="none" /><circle cx="8" cy="10.300" r="3.500" fill={g} stroke="none" />
          <path d="M4 3V6M9.500 3.500H11L9.800 6H11.500M7 9H9V12H7" stroke="#222" strokeWidth="0.800" />
        </Svg>
      </Tool>
      <Tool><span className="font-['Liberation_Serif'] text-[20px] leading-[20px] text-[#d0d0d0]">T</span></Tool>
      <Tool><Svg w={14} h={14}><path d="M8 1 13 5.500 9 10 4 5.500Z" fill={g} stroke="none" /><path d="M4 5.500 1 9 3 12.500H7L9 10" stroke={g} /></Svg></Tool>
      <div className="mt-[4px] h-px w-full shrink-0 bg-[#3a3f45]" />
      <Tool c="mt-[4px]">
        <div className="h-[14px] w-[14px] bg-[repeating-conic-gradient(#b0b8b0_0_25%,#fff_0_50%)] bg-[length:6px_6px]" />
      </Tool>
      <Tool><div className="h-[2px] w-[13px] bg-[#d8d8d8]" /></Tool>
      <div className="mt-[-1px] flex w-full flex-1 flex-col items-center bg-black pt-[5px]">
        <div className="h-px w-full bg-[#333]" />
        <C c="mt-[3px] h-[13px] w-[22px] border border-[#3a3f45] bg-[#0e1114]">
          <Svg w={17} h={7}><path d="M6 3.500H2M4 1 1.500 3.500 4 6M11 3.500H15M13 1 15.500 3.500 13 6" stroke="#eee" strokeWidth="1.500" /></Svg>
        </C>
      </div>
    </div>
  );
}

export default function App() {
  return (
    <div className="relative flex h-[720px] w-[1280px] flex-col overflow-hidden border-x border-black bg-[#e6e6e6] font-['Open_Sans',sans-serif]">
      <TitleBar />
      <TabBar />
      <Ribbon />
      <FormulaBar />
      <Sheet />
      <SheetTabs />
      <StatusBar />
      <Taskbar />
      <div className="absolute -left-px top-0 w-[1280px]">
        <RecorderBar />
        <DrawToolbar />
      </div>
    </div>
  );
}
